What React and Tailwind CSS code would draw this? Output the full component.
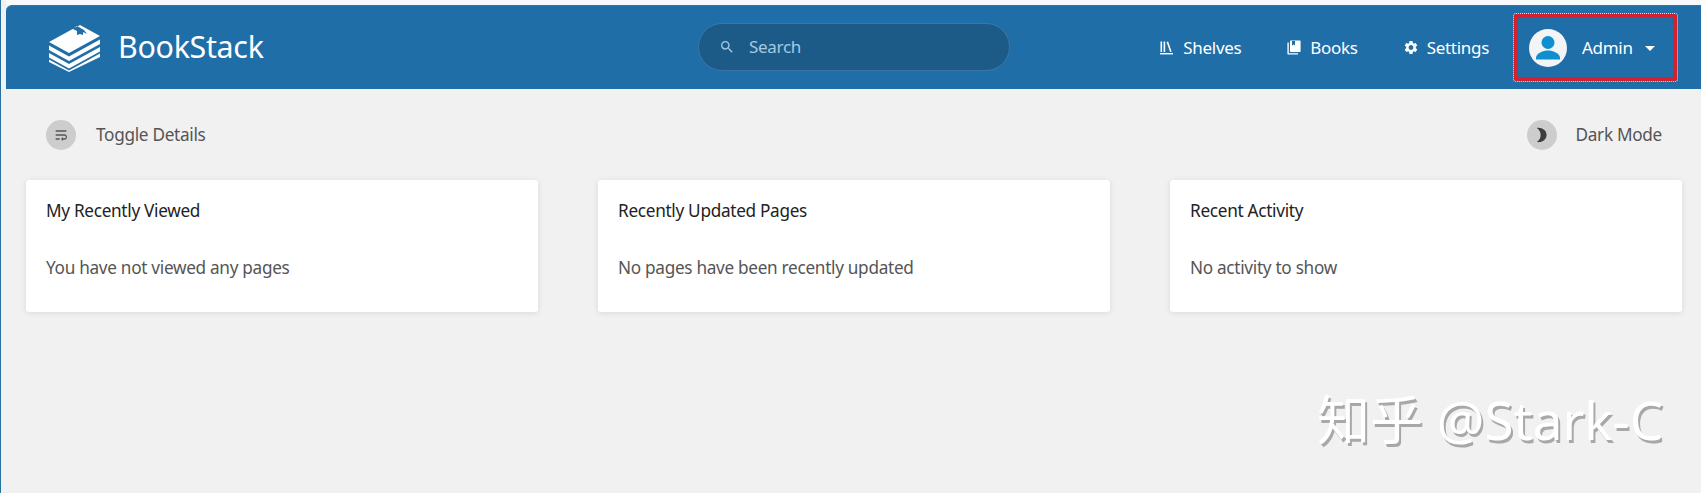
import { MdSearch, MdSettings, MdArrowDropDown, MdWrapText } from 'react-icons/md';

const FONT = "font-['Noto_Sans','Open_Sans',sans-serif]";

function Logo() {
  return (
    <svg viewBox="0 0 52 48" className="w-[52px] h-[48px] shrink-0" fill="#fff">
      <path d="M0 18 31 1 51 12 20 29Z M24 5l4 2 0 4 3-1 3 1 0-3 4 2-3-4-7-4Z" fillRule="evenodd" />
      <path d="M0 21.5 20 32.5 51 15.5V20L20 37 0 26Z" />
      <path d="M0 29 20 40 51 23V27.5L20 44.5 0 33.5Z" />
      <path d="M0 35.5 20 46.5 51 29.5V33L20 48 0 38Z" />
    </svg>
  );
}

function ShelvesIcon() {
  return (
    <svg viewBox="0 0 14 14" className="w-[14px] h-[14px]" fill="#fff">
      <rect x="0.5" y="0.5" width="1.6" height="10.5" />
      <rect x="3.6" y="0.5" width="1.6" height="10.5" />
      <path d="M6.6 1 8.1 .5 11.6 10.5 10.1 11Z" />
      <rect x="0" y="12" width="13" height="1.4" />
    </svg>
  );
}

function BooksIcon() {
  return (
    <svg viewBox="0 0 14 15" className="w-[14px] h-[15px]" fill="#fff">
      <path d="M0.4 2.5H1.8V13.2H11V14.6H1.4C.8 14.6 .4 14.2 .4 13.6Z" />
      <path d="M4 0.4H12.6C13.2 .4 13.6 .8 13.6 1.4V11C13.6 11.6 13.2 12 12.6 12H4C3.4 12 3 11.6 3 11V1.4C3 .8 3.4 .4 4 .4ZM5 .9V5.6L6.5 4.6 8 5.6V.9Z" fillRule="evenodd" />
    </svg>
  );
}

function Avatar() {
  return (
    <svg viewBox="0 0 38 38" className="w-[38px] h-[38px] shrink-0">
      <circle cx="19" cy="19" r="19" fill="#f2f4f5" />
      <circle cx="19" cy="13.5" r="6.5" fill="#0f8fd0" />
      <path d="M7 29c0-5 7.5-7.5 12-7.5S31 24 31 29v1.5H7Z" fill="#0f8fd0" />
    </svg>
  );
}

function MoonIcon() {
  return (
    <svg viewBox="0 0 14 14" className="w-[16px] h-[16px]" fill="#3c3c3c">
      <path d="M2.5 .8C7 .2 11 3 11 7s-4 6.8-8.5 6.2C4.8 11.6 5.8 9.4 5.8 7S4.8 2.4 2.5 .8Z" />
    </svg>
  );
}

function NavLink({ icon, label, className }) {
  return (
    <a className={`flex items-center gap-[8px] text-[17px] text-white ${className}`}>
      <span className="flex w-[16px] justify-center">{icon}</span>
      {label}
    </a>
  );
}

function Card({ title, text }) {
  return (
    <div className="h-[132px] rounded-[3px] bg-white px-[20px] pt-[19px] shadow-[0_1px_6px_rgba(0,0,0,0.1)]">
      <h5 className="text-[17.2px] leading-[24px] text-[#222]">{title}</h5>
      <p className="mt-[33px] text-[17.2px] leading-[24px] text-[#555]">{text}</p>
    </div>
  );
}

function ActionLink({ icon, label, className }) {
  return (
    <div className={`flex items-center text-[17.2px] text-[#555] ${className}`}>
      <span className="flex h-[30px] w-[30px] items-center justify-center rounded-full bg-[#cdcdcd]">{icon}</span>
      {label}
    </div>
  );
}

export default function App() {
  return (
    <div className={`relative flex h-[493px] w-[1701px] overflow-hidden bg-[#f1f1f1] ${FONT} tracking-[-0.3px]`}>
      {/* left edge of the captured window */}
      <div className="h-full w-[6px] shrink-0 border-l-[1.5px] border-[#2a6f9f] bg-[#eef2f5]" />

      <div className="min-w-0 flex-1">
        <div className="h-[5px] bg-[#f7f9fb]" />

        <header className="flex h-[84px] items-center rounded-tl-[6px] border-t border-[#44708f] bg-[#206ea7]">
          <div className="flex w-[692px] items-center pl-[43px]">
            <Logo />
            <span className="ml-[17px] text-[30.4px] leading-none text-white">BookStack</span>
          </div>

          <div className="-mt-[1px] flex h-[48px] w-[312px] items-center rounded-full border border-[#3a77a8] bg-[#1c5b88] pl-[20px] text-[17px] text-[#a5c8e3]">
            <MdSearch className="h-[16px] w-[16px] text-[#a5c8e3]" />
            <span className="ml-[14px]">Search</span>
          </div>

          <nav className="flex flex-1 items-center justify-end pr-[24px]">
            <NavLink icon={<ShelvesIcon />} label="Shelves" className="mr-[45px]" />
            <NavLink icon={<BooksIcon />} label="Books" className="mr-[45px]" />
            <NavLink icon={<MdSettings className="h-[19px] w-[19px]" />} label="Settings" className="mr-[25px]" />
            <div className="flex h-[67px] w-[163px] items-center rounded-[2px] border-[4px] border-[#d5202e] pl-[11px] outline-1 outline-dotted outline-white/80 text-[17px] text-white">
              <Avatar />
              <span className="ml-[15px]">Admin</span>
              <MdArrowDropDown className="ml-[5px] h-[24px] w-[24px]" />
            </div>
          </nav>
        </header>

        <div className="flex items-center justify-between pl-[40px] pr-[39px] pt-[31px]">
          <ActionLink icon={<MdWrapText className="h-[16px] w-[16px] text-[#555]" />} label="Toggle Details" className="gap-[20px]" />
          <ActionLink icon={<MoonIcon />} label="Dark Mode" className="gap-[19px]" />
        </div>

        <div className="grid grid-cols-3 gap-[60px] pl-[20px] pr-[19px] pt-[30px]">
          <Card title="My Recently Viewed" text="You have not viewed any pages" />
          <Card title="Recently Updated Pages" text="No pages have been recently updated" />
          <Card title="Recent Activity" text="No activity to show" />
        </div>
      </div>

      {/* zhihu watermark over the page */}
      <div className="absolute left-[1317px] top-[384px] font-['Noto_Sans','Noto_Sans_CJK_SC',sans-serif] text-[53px] leading-[72px] tracking-normal text-white [text-shadow:2px_3px_0_#a8a8a8]">
        知乎 @Stark-C
      </div>
    </div>
  );
}
